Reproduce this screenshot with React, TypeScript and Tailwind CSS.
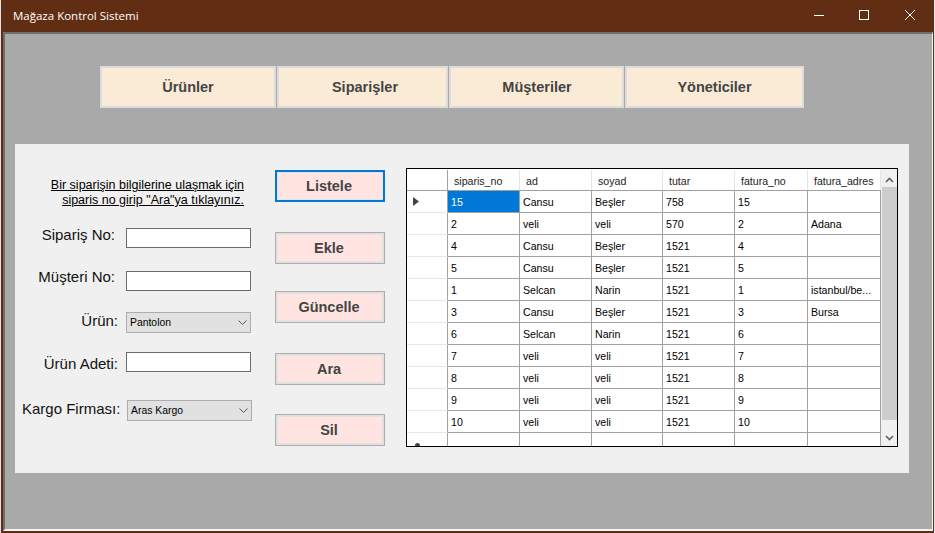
import React from 'react';

const navItems = [
  { label: 'Ürünler', width: 'w-[176px]' },
  { label: 'Siparişler', width: 'w-[171px] pl-[5px]' },
  { label: 'Müşteriler', width: 'w-[175px] pl-[1px]' },
  { label: 'Yöneticiler', width: 'w-[179px]' },
];

const columns = ['siparis_no', 'ad', 'soyad', 'tutar', 'fatura_no', 'fatura_adres'];

const rows = [
  ['15', 'Cansu', 'Beşler', '758', '15', ''],
  ['2', 'veli', 'veli', '570', '2', 'Adana'],
  ['4', 'Cansu', 'Beşler', '1521', '4', ''],
  ['5', 'Cansu', 'Beşler', '1521', '5', ''],
  ['1', 'Selcan', 'Narin', '1521', '1', 'istanbul/be...'],
  ['3', 'Cansu', 'Beşler', '1521', '3', 'Bursa'],
  ['6', 'Selcan', 'Narin', '1521', '6', ''],
  ['7', 'veli', 'veli', '1521', '7', ''],
  ['8', 'veli', 'veli', '1521', '8', ''],
  ['9', 'veli', 'veli', '1521', '9', ''],
  ['10', 'veli', 'veli', '1521', '10', ''],
];

const gridCols = 'grid grid-cols-[41px_72px_72px_71px_72px_73px_73px]';

const Chevron = () => (
  <svg width="9" height="6" viewBox="0 0 9 6" fill="none" stroke="#555" strokeWidth="1">
    <path d="M0.5 0.5 L4.5 4.5 L8.5 0.5" />
  </svg>
);

const ActionButton = ({ label, className = '', active = false }: { label: string; className?: string; active?: boolean }) => (
  <button
    className={`h-[32px] w-[110px] bg-[#ffe4e1] pr-[2px] pt-[1px] text-[14.5px] font-bold text-[#444] ${
      active
        ? 'border-2 border-[#0078d7] outline-1 -outline-offset-3 outline-[#e4e4e4]'
        : 'border border-[#adadad] outline-2 -outline-offset-3 outline-[#e1e1e1]'
    } ${className}`}
  >
    {label}
  </button>
);

const TextRow = ({ label, labelWidth, labelPad, className = '' }: { label: string; labelWidth: string; labelPad: string; className?: string }) => (
  <div className={`flex h-[20px] items-center ${className}`}>
    <span className={`${labelWidth} ${labelPad} whitespace-nowrap text-right text-[15px] text-[#111]`}>{label}</span>
    <input className="ml-auto h-[20px] w-[125px] border border-[#6b6b6b] bg-white" />
  </div>
);

const SelectRow = ({ label, value, labelWidth, labelPad, className = '' }: { label: string; value: string; labelWidth: string; labelPad: string; className?: string }) => (
  <div className={`flex h-[21px] items-center ${className}`}>
    <span className={`${labelWidth} ${labelPad} whitespace-nowrap text-right text-[15px] text-[#111]`}>{label}</span>
    <div className="ml-auto flex h-[21px] w-[125px] items-center justify-between border border-[#adadad] bg-[#e1e1e1] pl-[3px] pr-[3px] text-[10.4px] text-black">
      <span>{value}</span>
      <Chevron />
    </div>
  </div>
);

const DataGrid = () => (
  <div className="ml-[21px] mt-[24px] flex h-[279px] w-[492px] overflow-hidden border border-black bg-white text-[10.6px] leading-none text-black">
    <div className="w-[474px] shrink-0 pt-[1px]">
      <div className={`${gridCols} h-[21px] border-b border-[#a0a0a0]`}>
        <div className="border-r border-[#a0a0a0]" />
        {columns.map((c) => (
          <div key={c} className="flex items-center border-r border-[#e6e6e6] pl-[6px] pt-[3px] text-[#222]">
            {c}
          </div>
        ))}
      </div>
      {rows.map((row, i) => (
        <div key={i} className={`${gridCols} h-[22px]`}>
          <div className="flex items-center border-b border-r border-b-[#e6e6e6] border-r-[#a0a0a0] pl-[6px]">
            {i === 0 && (
              <svg width="6" height="9" viewBox="0 0 6 9">
                <path d="M0 0 L6 4.5 L0 9 Z" fill="#444" />
              </svg>
            )}
          </div>
          {row.map((cell, j) => (
            <div
              key={j}
              className={`flex items-center overflow-hidden whitespace-nowrap border-b border-r border-[#a0a0a0] pl-[3px] pt-[2px] ${
                i === 0 && j === 0 ? 'bg-[#0078d7] text-white' : ''
              }`}
            >
              {cell}
            </div>
          ))}
        </div>
      ))}
      <div className={`${gridCols} h-[14px]`}>
        <div className="flex items-end justify-start border-r border-[#a0a0a0] pl-[8px]">
          <span className="h-[4px] w-[5px] rounded-t-full bg-[#444]" />
        </div>
        {columns.map((c) => (
          <div key={c} className="border-r border-[#a0a0a0]" />
        ))}
      </div>
    </div>
    <div className="flex w-[16px] flex-col items-center bg-[#f0f0f0]">
      <div className="flex h-[18px] items-center pt-[4px]">
        <svg width="9" height="6" viewBox="0 0 9 6" fill="none" stroke="#606060" strokeWidth="1.6">
          <path d="M1 5 L4.5 1.5 L8 5" />
        </svg>
      </div>
      <div className="h-[233px] w-[15px] shrink-0 bg-[#cdcdcd]" />
      <div className="flex h-[26px] items-center pt-[10px]">
        <svg width="9" height="6" viewBox="0 0 9 6" fill="none" stroke="#606060" strokeWidth="1.6">
          <path d="M1 1 L4.5 4.5 L8 1" />
        </svg>
      </div>
    </div>
  </div>
);

export default function App() {
  return (
    <div className="h-[533px] w-[935px] overflow-hidden bg-[#dfe3e8] pl-[1px] font-['Liberation_Sans',Arial,sans-serif]">
      <div className="flex h-[533px] w-[933px] flex-col bg-[#622e13]">
        <div className="flex h-[32px] shrink-0 items-center">
          <span className="ml-[12px] font-['Open_Sans',sans-serif] text-[11.5px] text-white">Mağaza Kontrol Sistemi</span>
          <div className="ml-auto mr-[19px] flex items-center gap-[35px] pb-[2px]">
            <svg width="10" height="10" viewBox="0 0 10 10" stroke="#fff" strokeWidth="1" fill="none">
              <path d="M0 5.5 H10" />
            </svg>
            <svg width="10" height="10" viewBox="0 0 10 10" stroke="#fff" strokeWidth="1" fill="none">
              <rect x="0.5" y="0.5" width="9" height="9" />
            </svg>
            <svg className="ml-[1px]" width="10" height="10" viewBox="0 0 10 10" stroke="#fff" strokeWidth="1" fill="none">
              <path d="M0 0 L10 10 M10 0 L0 10" />
            </svg>
          </div>
        </div>
        <div className="ml-[2px] mr-[1px] h-[499px] border-b-2 border-l-2 border-r border-t-2 border-b-[#f4f4f4] border-l-[#6d6d6d] border-r-[#f4f4f4] border-t-[#6d6d6d] bg-[#a9a9a9]">
          <div className="ml-[95px] mt-[32px] flex h-[42px] gap-[1px]">
            {navItems.map((item) => (
              <button
                key={item.label}
                className={`${item.width} border-2 border-[#dcdcdc] bg-[#faebd7] pt-[1px] text-[14.5px] font-bold text-[#444]`}
              >
                {item.label}
              </button>
            ))}
          </div>
          <div className="ml-[10px] mt-[36px] flex h-[329px] w-[894px] bg-[#f0f0f0]">
            <div className="ml-[7px] w-[230px] shrink-0">
              <p className="ml-[-8px] mt-[34px] w-[230px] whitespace-nowrap text-right text-[12.5px] leading-[15px] text-black underline">
                Bir siparişin bilgilerine ulaşmak için
                <br />
                siparis no girip "Ara"ya tıklayınız.
              </p>
              <TextRow label="Sipariş No:" labelWidth="w-[93px]" labelPad="pb-[5px]" className="mt-[20px] pr-[1px]" />
              <TextRow label="Müşteri No:" labelWidth="w-[93px]" labelPad="pb-[7px]" className="mt-[23px] pr-[1px]" />
              <SelectRow label="Ürün:" value="Pantolon" labelWidth="w-[96px]" labelPad="pb-[3px]" className="mt-[21px] pr-[1px]" />
              <TextRow label="Ürün Adeti:" labelWidth="w-[96px]" labelPad="pt-[4px]" className="mt-[19px] pr-[1px]" />
              <SelectRow label="Kargo Firması:" value="Aras Kargo" labelWidth="w-[96px]" labelPad="pb-[3px]" className="mt-[28px]" />
            </div>
            <div className="ml-[23px] mt-[26px] flex shrink-0 flex-col">
              <ActionButton label="Listele" active />
              <ActionButton label="Ekle" className="mt-[30px]" />
              <ActionButton label="Güncelle" className="mt-[27px]" />
              <ActionButton label="Ara" className="mt-[30px]" />
              <ActionButton label="Sil" className="mt-[29px]" />
            </div>
            <DataGrid />
          </div>
        </div>
      </div>
    </div>
  );
}
